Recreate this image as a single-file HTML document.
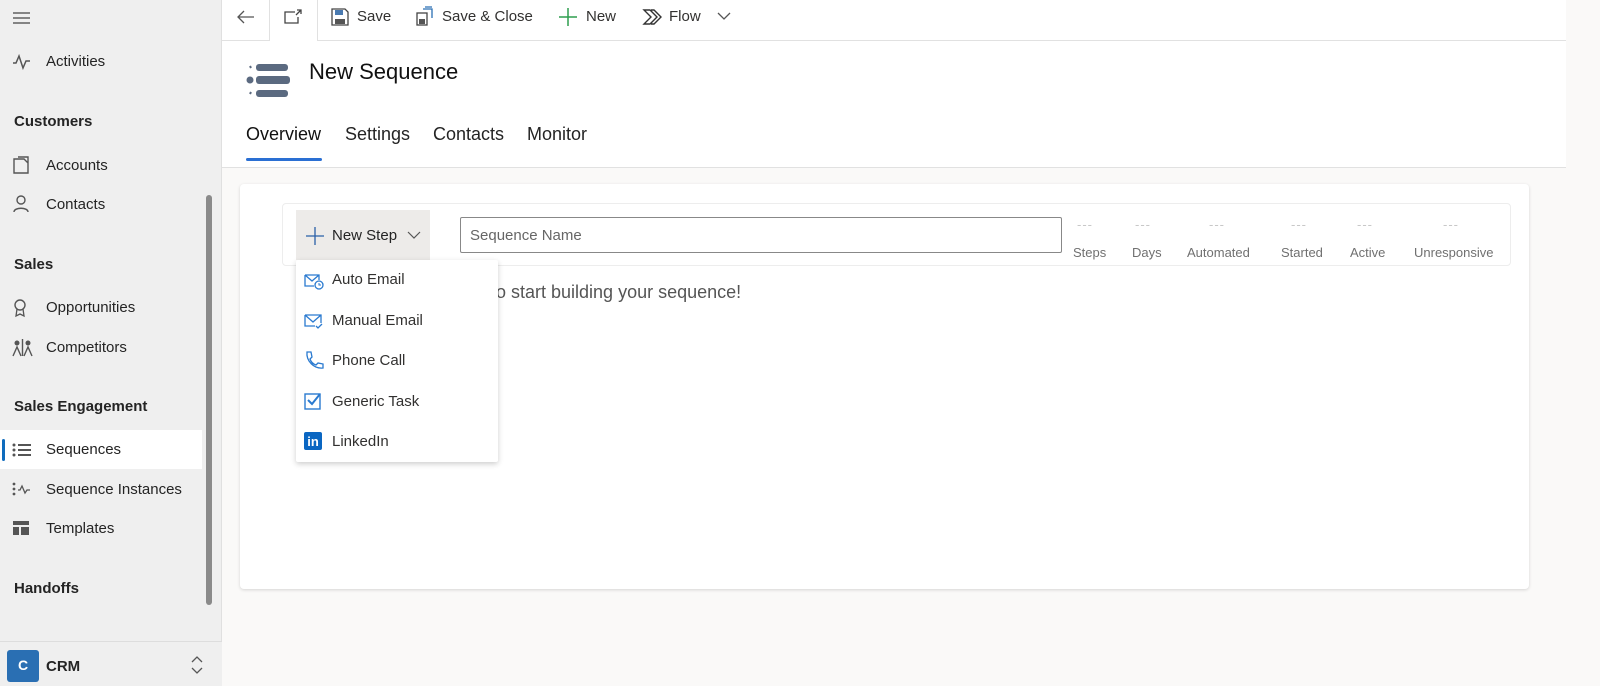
<!DOCTYPE html>
<html><head><style>
*{box-sizing:border-box;margin:0;padding:0}
body{width:1600px;height:686px;overflow:hidden;font-family:"Liberation Sans",sans-serif;background:#faf9f8;position:relative;color:#242424}
.sb{position:absolute;left:0;top:0;width:222px;height:686px;background:#efefef;border-right:1px solid #e0e0e0}
.it{position:absolute;left:46px;font-size:15px;color:#242424}
.hd{position:absolute;left:14px;font-size:15px;font-weight:bold;color:#242424}
.ic{position:absolute;left:12px}
.top{position:absolute;left:222px;top:0;width:1344px;height:168px;background:#fff;border-bottom:1px solid #e1e1e1}
.tb{position:absolute;top:0;height:41px;border-bottom:1px solid #e1e1e1;left:0;right:0}
.tbt{position:absolute;top:8px;font-size:15px;color:#323130}
.card{position:absolute;left:240px;top:184px;width:1289px;height:405px;background:#fff;border-radius:4px;box-shadow:0 1px 3px rgba(0,0,0,.15)}
.st{position:absolute;top:245px;font-size:13px;color:#707070}
.dash{position:absolute;top:217px;font-size:13px;color:#c8c8c8;letter-spacing:1px}
.mi{position:absolute;left:332px;font-size:15px;color:#323130}
</style></head><body>
<div class="sb">
<svg style="position:absolute;left:12px;top:12px" width="20" height="12"><path d="M1 1h17M1 6h17M1 11h17" stroke="#444" stroke-width="1.3"/></svg>
<svg class="ic" style="top:54px" width="20" height="16"><path d="M1 9h3l3-7 4 12 3-7h4" fill="none" stroke="#555" stroke-width="1.5"/></svg>
<div class="it" style="top:53px">Activities</div>
<div class="hd" style="top:113px">Customers</div>
<svg class="ic" style="top:156px" width="20" height="18"><path d="M2 3h10l4 4v10H2zM6 1h10v16" fill="none" stroke="#555" stroke-width="1.4"/></svg>
<div class="it" style="top:157px">Accounts</div>
<svg class="ic" style="top:195px" width="20" height="18"><circle cx="9" cy="5" r="4" fill="none" stroke="#555" stroke-width="1.4"/><path d="M2 17c0-5 14-5 14 0" fill="none" stroke="#555" stroke-width="1.4"/></svg>
<div class="it" style="top:196px">Contacts</div>
<div class="hd" style="top:256px">Sales</div>
<svg class="ic" style="top:298px" width="20" height="20"><circle cx="8" cy="7" r="5" fill="none" stroke="#555" stroke-width="1.4"/><path d="M5 11l-1 7 4-2 4 2-1-7" fill="none" stroke="#555" stroke-width="1.3"/></svg>
<div class="it" style="top:299px">Opportunities</div>
<svg class="ic" style="top:338px" width="22" height="20"><circle cx="5" cy="5" r="2.5" fill="#555"/><circle cx="16" cy="5" r="2.5" fill="#555"/><path d="M1 18l4-9 4 9M12 18l4-9 4 9M10.5 1v17" fill="none" stroke="#555" stroke-width="1.4"/></svg>
<div class="it" style="top:339px">Competitors</div>
<div class="hd" style="top:398px">Sales Engagement</div>
<div style="position:absolute;left:0;top:430px;width:202px;height:39px;background:#fff"></div>
<div style="position:absolute;left:2px;top:439px;width:3px;height:22px;background:#0f6cbd;border-radius:2px"></div>
<svg class="ic" style="top:443px" width="20" height="14"><path d="M6 2h13M6 7h13M6 12h13" stroke="#555" stroke-width="2"/><circle cx="2" cy="2" r="1.5" fill="#555"/><circle cx="2" cy="7" r="1.5" fill="#555"/><circle cx="2" cy="12" r="1.5" fill="#555"/></svg>
<div class="it" style="top:441px">Sequences</div>
<svg class="ic" style="top:482px" width="20" height="14"><circle cx="2" cy="2" r="1.4" fill="#555"/><circle cx="2" cy="7" r="1.4" fill="#555"/><circle cx="2" cy="12" r="1.4" fill="#555"/><path d="M6 8h2l2-4 3 7 2-3h3" fill="none" stroke="#555" stroke-width="1.3"/></svg>
<div class="it" style="top:481px">Sequence Instances</div>
<svg class="ic" style="top:520px" width="18" height="16"><rect x="1" y="1" width="16" height="4" fill="#555"/><rect x="1" y="7" width="6" height="8" fill="#555"/><rect x="9" y="7" width="8" height="8" fill="#555"/></svg>
<div class="it" style="top:520px">Templates</div>
<div class="hd" style="top:580px">Handoffs</div>
<div style="position:absolute;left:206px;top:195px;width:6px;height:410px;background:#8a8a8a;border-radius:3px"></div>
<div style="position:absolute;left:0;top:641px;width:222px;height:45px;background:#efefef;border-top:1px solid #ddd"></div>
<div style="position:absolute;left:7px;top:650px;width:32px;height:32px;background:#2a6fb3;border-radius:3px;color:#fff;font-size:14px;font-weight:bold;text-align:center;line-height:30px">C</div>
<div style="position:absolute;left:46px;top:658px;font-size:15px;font-weight:bold">CRM</div>
<svg style="position:absolute;left:190px;top:655px" width="14" height="20"><path d="M2 7l5-5 5 5M2 13l5 5 5-5" fill="none" stroke="#555" stroke-width="1.3"/></svg>
</div>
<div class="top">
<div class="tb">
<svg style="position:absolute;left:14px;top:9px" width="20" height="16"><path d="M18 8H2M8 2L2 8l6 6" fill="none" stroke="#555" stroke-width="1.3"/></svg>
<div style="position:absolute;left:47px;top:0;width:49px;height:41px;border-left:1px solid #e1e1e1;border-right:1px solid #e1e1e1;background:#fff"></div>
<svg style="position:absolute;left:61px;top:9px" width="20" height="16"><path d="M12 3H2v11h13V8M14 1h4v4M18 1l-5 5" fill="none" stroke="#444" stroke-width="1.3"/></svg>
<svg style="position:absolute;left:109px;top:8px" width="18" height="18"><path d="M1 1h13l3 3v13H1z" fill="none" stroke="#444" stroke-width="1.3"/><rect x="4" y="2" width="8" height="5" fill="#4a7ab0"/><rect x="4" y="11" width="10" height="5" fill="#555"/></svg>
<div class="tbt" style="left:135px">Save</div>
<svg style="position:absolute;left:193px;top:6px" width="20" height="20"><rect x="2" y="7" width="10" height="12" fill="none" stroke="#444" stroke-width="1.3"/><rect x="4" y="13" width="6" height="5" fill="#555"/><path d="M8 3h9v9M10 1h7" fill="none" stroke="#2a6fb3" stroke-width="1.3"/></svg>
<div class="tbt" style="left:220px">Save &amp; Close</div>
<svg style="position:absolute;left:336px;top:7px" width="20" height="20"><path d="M10 1v18M1 10h18" stroke="#2e9e4f" stroke-width="1.5"/></svg>
<div class="tbt" style="left:364px">New</div>
<svg style="position:absolute;left:420px;top:8px" width="20" height="18"><path d="M2 2h6l7 7-7 7H2l7-7zM9 2h3l7 7-7 7H9" fill="none" stroke="#333" stroke-width="1.4"/></svg>
<div class="tbt" style="left:447px">Flow</div>
<svg style="position:absolute;left:495px;top:11px" width="14" height="10"><path d="M1 2l6 6 6-6" fill="none" stroke="#555" stroke-width="1.3"/></svg>
</div>
<svg style="position:absolute;left:24px;top:62px" width="46" height="38"><rect x="10" y="2" width="32" height="7" rx="3" fill="#5b6a80"/><rect x="10" y="14" width="34" height="8" rx="3" fill="#5b6a80"/><rect x="10" y="28" width="32" height="7" rx="3" fill="#5b6a80"/><circle cx="4" cy="18" r="3.5" fill="#5b6a80"/><path d="M4 4l1 2M4 32l1-2" stroke="#5b6a80" stroke-width="2"/></svg>
<div style="position:absolute;left:87px;top:59px;font-size:22px;color:#111">New Sequence</div>
<div style="position:absolute;left:24px;top:124px;font-size:18px;color:#111">Overview</div>
<div style="position:absolute;left:24px;top:158px;width:76px;height:3px;background:#2a6fd3;border-radius:2px"></div>
<div style="position:absolute;left:123px;top:124px;font-size:18px;color:#242424">Settings</div>
<div style="position:absolute;left:211px;top:124px;font-size:18px;color:#242424">Contacts</div>
<div style="position:absolute;left:305px;top:124px;font-size:18px;color:#242424">Monitor</div>
</div>
<div class="card"></div>
<div style="position:absolute;left:282px;top:203px;width:1229px;height:63px;border:1px solid #ededed;border-radius:4px;background:#fff"></div>
<div style="position:absolute;left:296px;top:210px;width:134px;height:50px;background:#edebe9"></div>
<svg style="position:absolute;left:306px;top:227px" width="18" height="18"><path d="M9 0v18M0 9h18" stroke="#2a5fa8" stroke-width="1.3"/></svg>
<div style="position:absolute;left:332px;top:227px;font-size:15px">New Step</div>
<svg style="position:absolute;left:407px;top:231px" width="14" height="9"><path d="M1 1l6 6 6-6" fill="none" stroke="#555" stroke-width="1.2"/></svg>
<div style="position:absolute;left:460px;top:217px;width:602px;height:36px;border:1px solid #888;border-radius:2px;padding:9px 9px;font-size:15px;color:#666">Sequence Name</div>
<div class="dash" style="left:1077px">---</div><div class="st" style="left:1073px">Steps</div>
<div class="dash" style="left:1135px">---</div><div class="st" style="left:1132px">Days</div>
<div class="dash" style="left:1209px">---</div><div class="st" style="left:1187px">Automated</div>
<div class="dash" style="left:1291px">---</div><div class="st" style="left:1281px">Started</div>
<div class="dash" style="left:1357px">---</div><div class="st" style="left:1350px">Active</div>
<div class="dash" style="left:1443px">---</div><div class="st" style="left:1414px">Unresponsive</div>
<div style="position:absolute;left:496px;top:282px;font-size:18px;color:#555">o start building your sequence!</div>
<div style="position:absolute;left:296px;top:260px;width:202px;height:202px;background:#fff;box-shadow:0 2px 6px rgba(0,0,0,.2);border-radius:2px"></div>
<svg style="position:absolute;left:304px;top:272px" width="20" height="18"><path d="M1 3h14v5M1 3v11h9M1 3l7 6 7-6" fill="none" stroke="#2a7ad0" stroke-width="1.3"/><circle cx="15" cy="13" r="4" fill="#fff" stroke="#2a7ad0" stroke-width="1.3"/><path d="M15 11v2h2" fill="none" stroke="#2a7ad0"/></svg>
<div class="mi" style="top:271px">Auto Email</div>
<svg style="position:absolute;left:304px;top:313px" width="20" height="18"><path d="M1 2h16v8M1 2v11h10M1 2l8 7 8-7M12 13l2 2 4-4" fill="none" stroke="#2a7ad0" stroke-width="1.3"/></svg>
<div class="mi" style="top:312px">Manual Email</div>
<svg style="position:absolute;left:304px;top:351px" width="20" height="20"><path d="M3 1l4 0 1 5-2 2c1 3 3 5 6 6l2-2 5 1v4c-9 1-17-7-16-16z" fill="none" stroke="#2a7ad0" stroke-width="1.3"/></svg>
<div class="mi" style="top:352px">Phone Call</div>
<svg style="position:absolute;left:304px;top:392px" width="18" height="18"><rect x="1" y="2" width="15" height="15" fill="none" stroke="#2a7ad0" stroke-width="1.4"/><path d="M4 8l4 4 8-10" fill="none" stroke="#2a7ad0" stroke-width="2"/></svg>
<div class="mi" style="top:393px">Generic Task</div>
<div style="position:absolute;left:304px;top:432px;width:18px;height:18px;background:#0a66c2;border-radius:2px;color:#fff;font-size:13px;font-weight:bold;line-height:19px;text-align:center">in</div>
<div class="mi" style="top:433px">LinkedIn</div>
</body></html>
